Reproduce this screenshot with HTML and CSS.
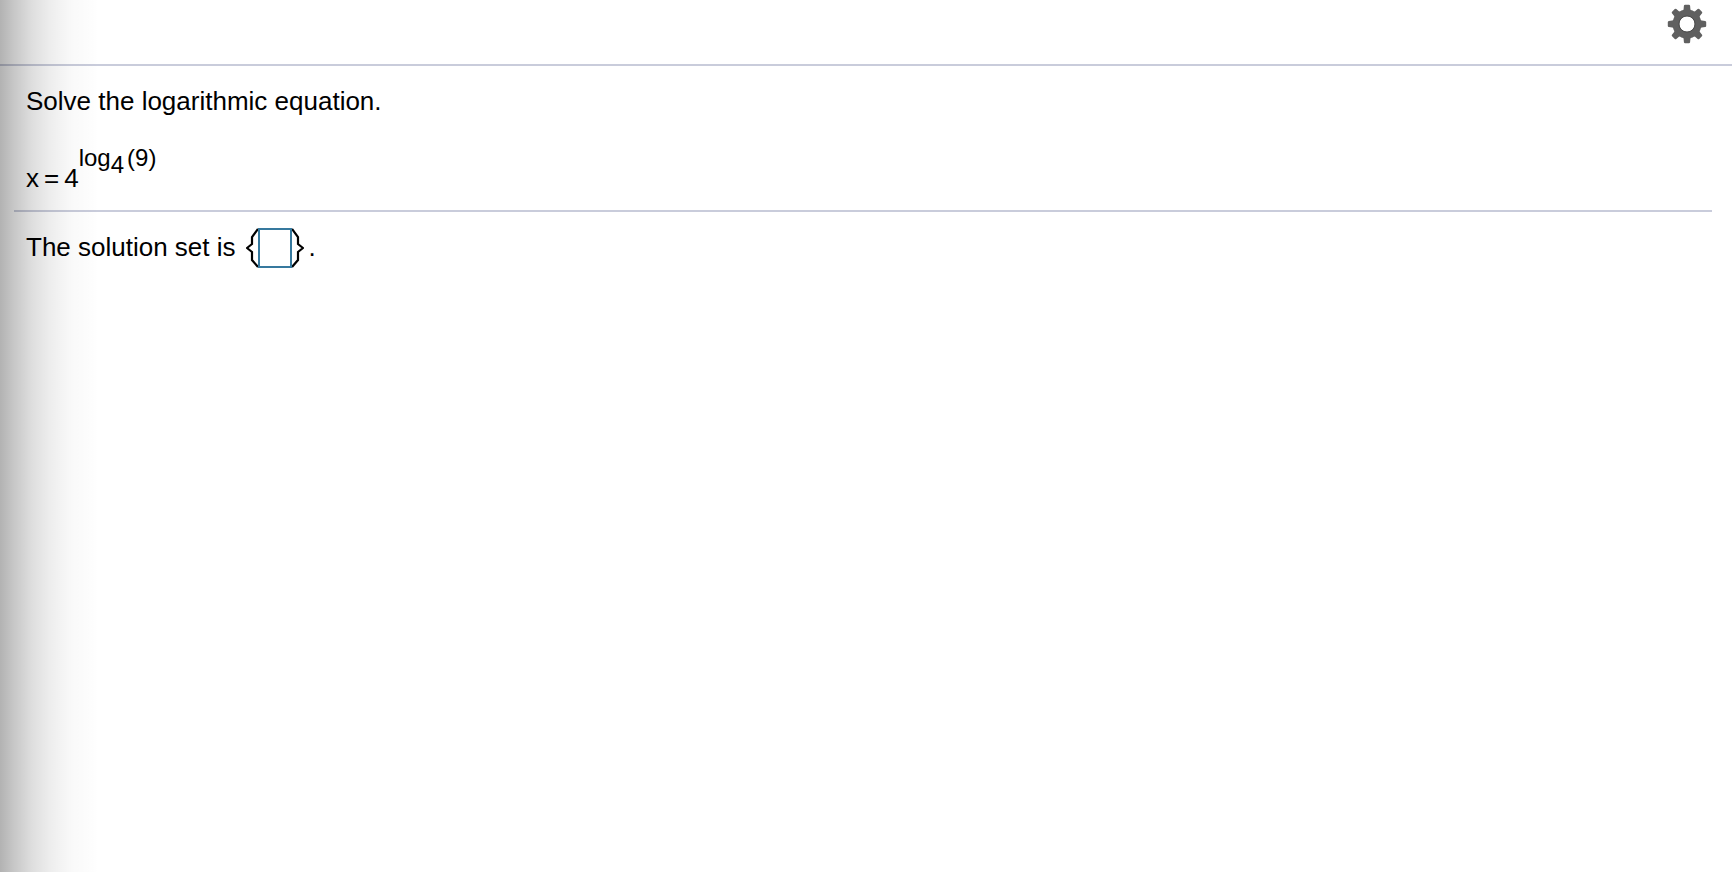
FILE: index.html
```html
<!DOCTYPE html>
<html lang="en">
<head>
<meta charset="utf-8">
<title>Solve the logarithmic equation</title>
<link rel="stylesheet" href="styles.css">
</head>
<body>
<header class="toolbar">
  <svg class="gear" viewBox="-20 -20 40 40" aria-label="Settings">
    <defs>
      <path id="tooth" d="M-4.2-12 L-3.4-14.8 L-3.1-18.2 Q-2.9-19.2-1.9-19.2 H1.9 Q2.9-19.2 3.1-18.2 L3.4-14.8 L4.2-12Z"/>
    </defs>
    <g fill="#606060">
      <use href="#tooth"/><use href="#tooth" transform="rotate(45)"/><use href="#tooth" transform="rotate(90)"/><use href="#tooth" transform="rotate(135)"/><use href="#tooth" transform="rotate(180)"/><use href="#tooth" transform="rotate(225)"/><use href="#tooth" transform="rotate(270)"/><use href="#tooth" transform="rotate(315)"/>
    </g>
    <circle r="11.1" fill="none" stroke="#606060" stroke-width="6.8"/>
    <circle r="8.1" fill="none" stroke="#4c4c4c" stroke-width="1"/>
  </svg>
</header>
<main class="exercise">
  <section class="question">
    <p class="prompt">Solve the logarithmic equation.</p>
    <div class="equation">
      <span class="variable">x</span><span class="equals">=</span><span>4</span><span class="exponent">log<span class="log-base">4</span><span class="argument">(9)</span></span>
    </div>
  </section>
  <section class="answer">
    <span class="answer-label">The solution set is</span>
    <svg class="brace brace-open" viewBox="0 0 12 40"><path d="M12 1 L6 9 V16 L1 20 L6 24 V32 L12 39"/></svg>
    <input class="answer-box" type="text" aria-label="Solution">
    <svg class="brace" viewBox="0 0 12 40"><path d="M0 1 L6 9 V16 L11 20 L6 24 V32 L0 39"/></svg>
    <span class="period">.</span>
  </section>
</main>
<div class="edge-shadow"></div>
</body>
</html>
```
FILE: styles.css
```css
* { box-sizing: border-box; }
body {
  margin: 0;
  height: 872px;
  overflow: hidden;
  position: relative;
  background: #fff;
  color: #000;
  font: 26px/30px "Liberation Sans", Arial, sans-serif;
}
.toolbar {
  height: 66px;
  padding: 4px 25px 0 0;
  display: flex;
  justify-content: flex-end;
  border-bottom: 2px solid #c9ccdb;
}
.gear { width: 40px; height: 40px; }
.exercise { padding: 0 20px 0 14px; }
.question {
  height: 146px;
  padding: 20px 0 0 12px;
  border-bottom: 2px solid #c9ccdb;
}
.prompt { margin: 0 0 47px; }
.equation { display: flex; white-space: nowrap; }
.variable { margin-right: 5px; }
.equals { margin-right: 5px; }
.exponent {
  display: flex;
  margin-top: -20px;
  font-size: 24px;
}
.log-base { margin-top: 7px; }
.argument { margin-left: 3px; }
.answer {
  display: flex;
  align-items: center;
  height: 40px;
  margin-top: 16px;
  padding-left: 12px;
}
.answer-label, .period { padding-bottom: 2px; }
.brace {
  width: 12px;
  height: 40px;
  fill: none;
  stroke: #000;
  stroke-width: 2.2;
}
.brace-open { margin-left: 10px; }
.answer-box {
  width: 34px;
  height: 40px;
  margin: 0;
  padding: 0;
  border: 2px solid #36799e;
  border-radius: 0;
  background: #fff;
  outline: none;
}
.period { margin-left: 5px; }
.edge-shadow {
  position: absolute;
  inset: 0 auto 0 0;
  width: 97px;
  pointer-events: none;
  background: linear-gradient(to right, rgba(0,0,0,.3) 0, rgba(0,0,0,.22) 14px, rgba(0,0,0,.13) 32px, rgba(0,0,0,.07) 50px, rgba(0,0,0,.025) 72px, rgba(0,0,0,.004) 96px, transparent 97px);
}
```
